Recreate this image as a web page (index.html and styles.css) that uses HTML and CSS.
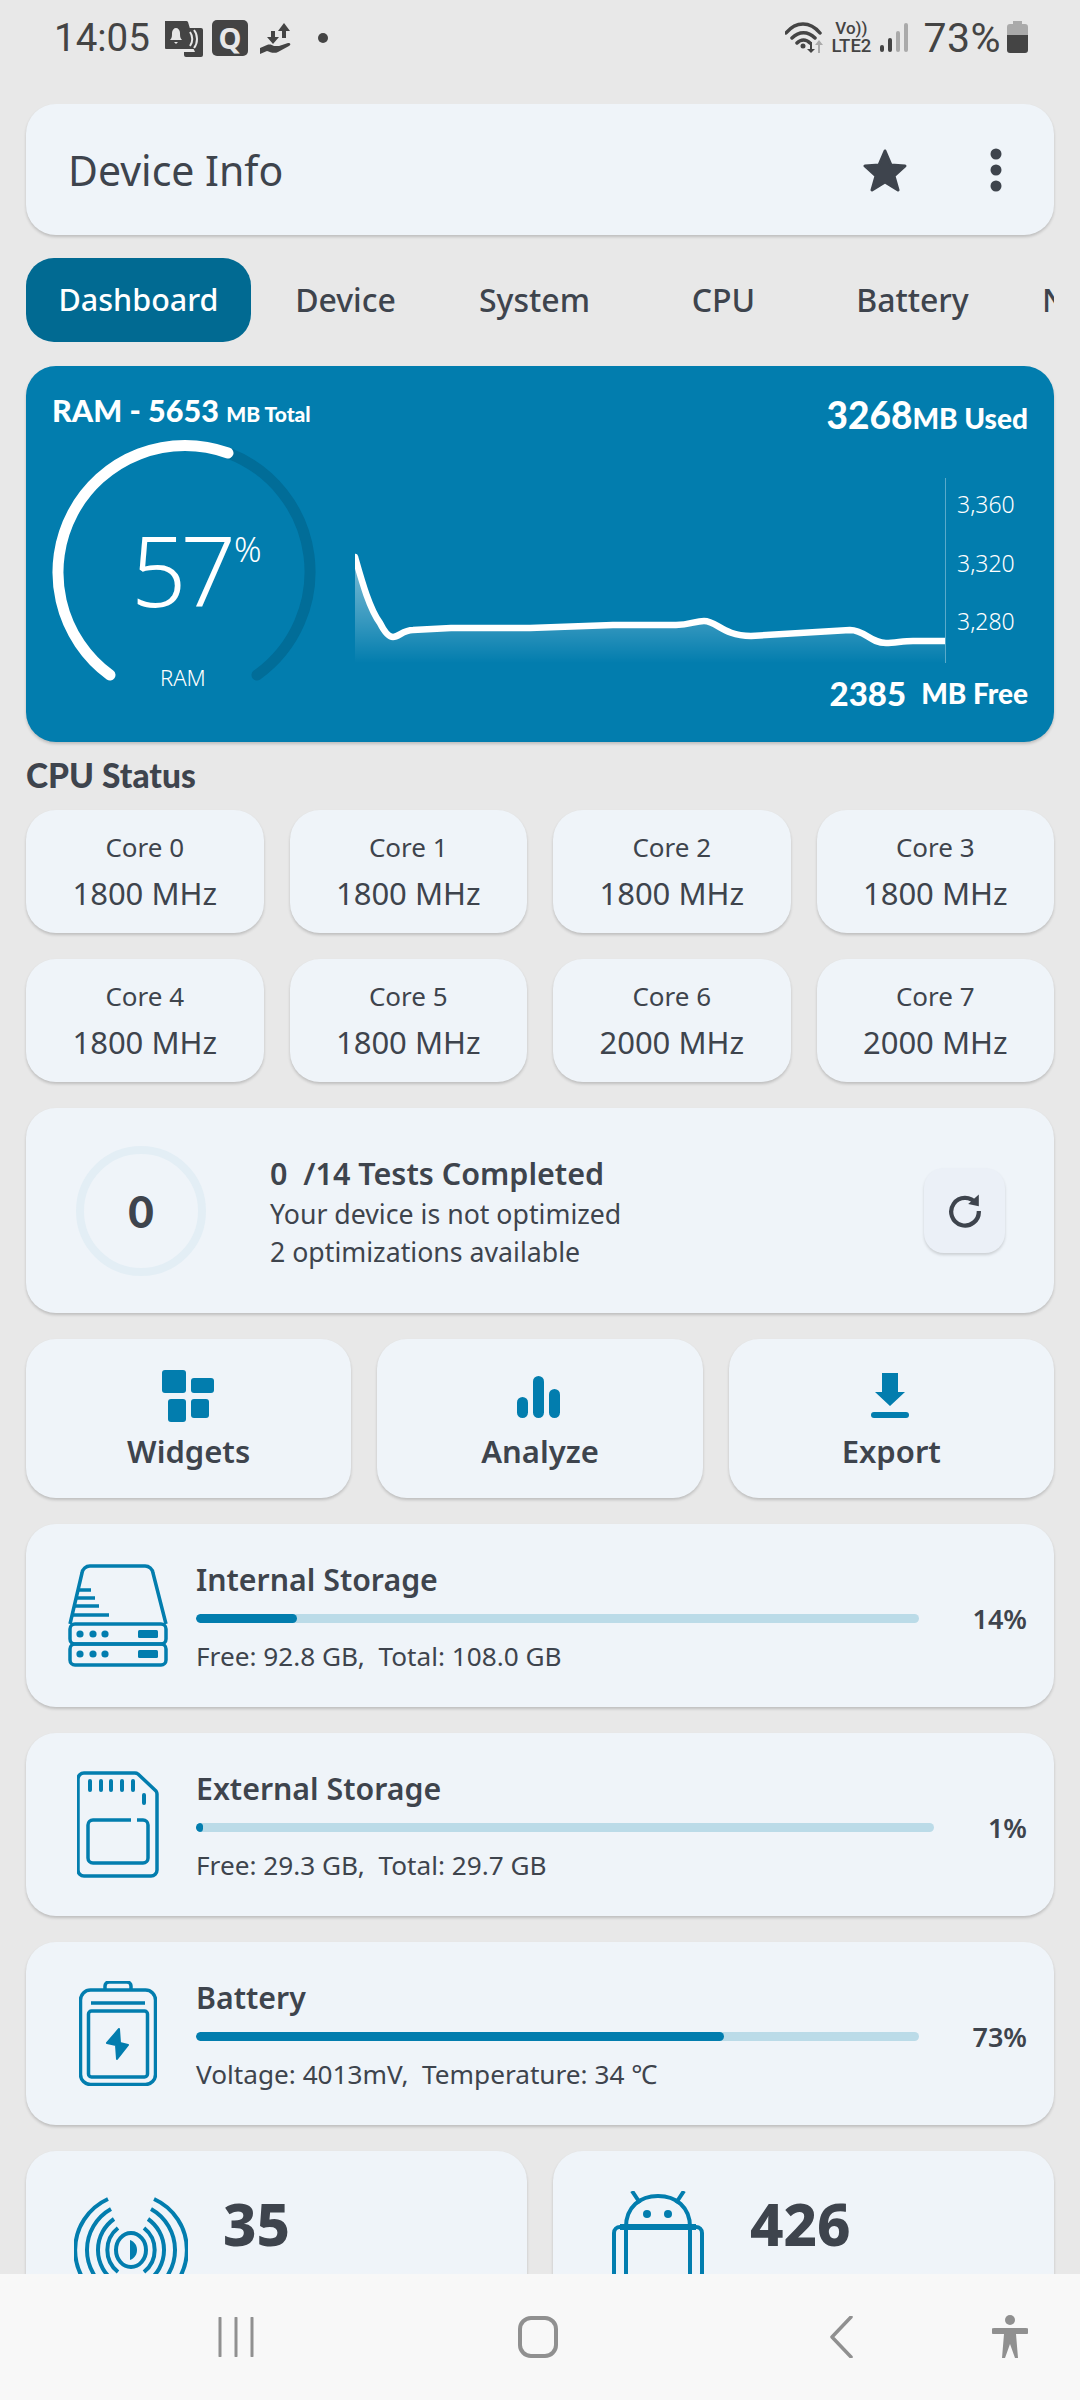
FILE: index.html
```html
<!DOCTYPE html>
<html lang="en">
<head>
<meta charset="utf-8">
<title>Device Info</title>
<link rel="stylesheet" href="styles.css">
</head>
<body>
<div class="screen">
  <header class="status">
    <div class="status-left">
      <span class="clock">14:05</span>
      <svg class="si-bell" viewBox="0 0 40 38"><path class="ink" d="M2 2h21a2 2 0 0 1 2 1l8 27h-30a1 1 0 0 1-1-1z"/><path class="cut" d="M7 21c2-2 2-4 2-7 0-3 2-5 4-5s4 2 4 5c0 3 0 5 2 7zM11 23h4l-2 2z"/><path class="ink" d="M21 9h17a2 2 0 0 1 2 2v25a2 2 0 0 1-2 2h-15a2 2 0 0 1-2-2v-3h11z"/><path class="arcs" d="M27 13c3 4 3 10 0 14M31 11c4 5 4 13 0 18"/></svg>
      <span class="si-q">Q</span>
      <svg class="si-transfer" viewBox="0 0 32 32"><path class="ink" d="M11 8h4v6h4l-6 7-6-7h4zM22 15V8h-4l6-8 6 8h-4v7z"/><path class="ink" d="M0 25l7-3c3-1 5 0 7 1h5l9-3c3 0 3 2 1 3l-11 6c-4 2-8 0-11-1l-7 3z"/></svg>
      <span class="si-dot"></span>
    </div>
    <div class="status-right">
      <svg class="si-wifi" viewBox="0 0 42 31"><path class="wifi" d="M1 11c10-12 24-12 34 0M7 16c7-7 16-7 23 0M12 21c4-4 9-4 13 0"/><circle class="ink" cx="18" cy="24" r="2.5"/><path class="ink" d="M25 20h2v7h3l-4 4-4-4h3z"/><path class="grey" d="M33 31v-8h-3l4-5 4 5h-3v8z"/></svg>
      <span class="net"><span class="net-vo">Vo))</span><span class="net-lte">LTE2</span></span>
      <svg class="si-signal" viewBox="0 0 28 30"><rect class="ink" x="0" y="22" width="4" height="7" rx="2"/><rect class="ink" x="8" y="15" width="4" height="14" rx="2"/><rect class="grey" x="16" y="8" width="4" height="21" rx="2"/><rect class="grey" x="24" y="0" width="4" height="29" rx="2"/></svg>
      <span class="pct">73%</span>
      <svg class="si-batt" viewBox="0 0 21 32"><path class="grey" d="M6 0h9v3h3a3 3 0 0 1 3 3v9H0V6a3 3 0 0 1 3-3h3z"/><path class="ink" d="M0 14h21v15a3 3 0 0 1-3 3H3a3 3 0 0 1-3-3z"/></svg>
    </div>
  </header>

  <main class="content">
    <section class="card appbar">
      <h1 class="app-title">Device Info</h1>
      <svg class="star" viewBox="0 0 46 44"><path d="M23 3l6 14 14 1-11 10 4 14-13-8-13 8 4-14L3 18l14-1z"/></svg>
      <svg class="dots" viewBox="0 0 12 44"><circle cx="6" cy="6" r="5.5"/><circle cx="6" cy="22" r="5.5"/><circle cx="6" cy="38" r="5.5"/></svg>
    </section>

    <nav class="tabs">
      <span class="tab tab-on">Dashboard</span>
      <span class="tab">Device</span>
      <span class="tab">System</span>
      <span class="tab">CPU</span>
      <span class="tab">Battery</span>
      <span class="tab tab-last">Network</span>
    </nav>

    <section class="ram">
      <div class="ram-head">
        <span class="ram-total"><b>RAM - 5653</b> <small>MB Total</small></span>
        <span class="ram-used"><b>3268</b><small>MB Used</small></span>
      </div>
      <div class="ram-body">
        <div class="gauge">
          <svg class="gauge-svg" viewBox="0 0 264 250">
            <path class="g-track" d="M205 239A127 127 0 0 0 176 17"/>
            <path class="g-fill" d="M58 239A127 127 0 0 1 176 17"/>
          </svg>
          <span class="gauge-val">57</span>
          <span class="gauge-unit">%</span>
          <span class="gauge-name">RAM</span>
        </div>
        <div class="ram-right">
          <div class="plot">
            <svg class="chart" viewBox="0 0 590 185">
              <defs><linearGradient id="fade" gradientUnits="userSpaceOnUse" x1="0" y1="79" x2="0" y2="185"><stop offset="0" stop-color="#fff" stop-opacity=".5"/><stop offset=".62" stop-color="#fff" stop-opacity=".2"/><stop offset="1" stop-color="#fff" stop-opacity="0"/></linearGradient></defs>
              <path fill="url(#fade)" d="M0 79C6 100 14 130 25 145C30 155 34 159 38 159C44 159 48 152 58 152L96 150L175 150L258 147L321 147C335 147 340 143 349 143C362 143 368 158 396 158L495 152C510 152 515 165 531 165C540 165 548 163 558 163L590 163V185H0Z"/>
              <path class="line" d="M0 79C6 100 14 130 25 145C30 155 34 159 38 159C44 159 48 152 58 152L96 150L175 150L258 147L321 147C335 147 340 143 349 143C362 143 368 158 396 158L495 152C510 152 515 165 531 165C540 165 548 163 558 163L590 163"/>
            </svg>
            <div class="axis"><span>3,360</span><span>3,320</span><span>3,280</span></div>
          </div>
          <div class="ram-free"><b>2385</b><small>MB Free</small></div>
        </div>
      </div>
    </section>

    <h2 class="section-title">CPU Status</h2>
    <section class="cores">
      <div class="card core"><span class="core-name">Core 0</span><span class="core-val">1800 MHz</span></div>
      <div class="card core"><span class="core-name">Core 1</span><span class="core-val">1800 MHz</span></div>
      <div class="card core"><span class="core-name">Core 2</span><span class="core-val">1800 MHz</span></div>
      <div class="card core"><span class="core-name">Core 3</span><span class="core-val">1800 MHz</span></div>
      <div class="card core"><span class="core-name">Core 4</span><span class="core-val">1800 MHz</span></div>
      <div class="card core"><span class="core-name">Core 5</span><span class="core-val">1800 MHz</span></div>
      <div class="card core"><span class="core-name">Core 6</span><span class="core-val">2000 MHz</span></div>
      <div class="card core"><span class="core-name">Core 7</span><span class="core-val">2000 MHz</span></div>
    </section>

    <section class="card tests">
      <div class="ring">0</div>
      <div class="tests-text">
        <div class="tests-title">0&nbsp;&nbsp;/14 Tests Completed</div>
        <div class="tests-sub">Your device is not optimized</div>
        <div class="tests-sub">2 optimizations available</div>
      </div>
      <div class="refresh">
        <svg viewBox="0 0 32 32"><path class="ref-arc" d="M26.5 9A13 13 0 1 0 29 16"/><path class="ref-head" d="M19 9.5L29 11.5V0.5z"/></svg>
      </div>
    </section>

    <section class="actions">
      <div class="card action">
        <svg class="act-icon" viewBox="0 0 52 52"><rect class="blue" x="0" y="0" width="24" height="23" rx="3"/><rect class="blue" x="29" y="8" width="23" height="15" rx="3"/><rect class="blue" x="6" y="29" width="18" height="23" rx="3"/><rect class="blue" x="29" y="29" width="18" height="19" rx="3"/></svg>
        <span class="act-label">Widgets</span>
      </div>
      <div class="card action">
        <svg class="act-icon" viewBox="0 0 52 52"><rect class="blue" x="4" y="27" width="11" height="21" rx="5.5"/><rect class="blue" x="20" y="6" width="11" height="42" rx="5.5"/><rect class="blue" x="36" y="19" width="11" height="29" rx="5.5"/></svg>
        <span class="act-label">Analyze</span>
      </div>
      <div class="card action">
        <svg class="act-icon" viewBox="0 0 52 52"><path class="blue" d="M18 3h16v19h7L26 36 11 22h7z"/><rect class="blue" x="7" y="42" width="38" height="6" rx="3"/></svg>
        <span class="act-label">Export</span>
      </div>
    </section>

    <section class="card store">
      <svg class="store-icon drive" viewBox="0 0 100 103"><g class="out"><path d="M2 60L14 9a8 8 0 0 1 8-7h55a8 8 0 0 1 8 7l13 51"/><rect x="2" y="60" width="96" height="20" rx="5"/><rect x="2" y="80" width="96" height="21" rx="5"/><path d="M9 26h14M7 34h20M5 42h26M3 51h38"/></g><g class="blue"><circle cx="12" cy="70" r="3.6"/><circle cx="25" cy="70" r="3.6"/><circle cx="37" cy="70" r="3.6"/><rect x="70" y="66" width="20" height="8" rx="1.5"/><circle cx="12" cy="90" r="3.6"/><circle cx="25" cy="90" r="3.6"/><circle cx="37" cy="90" r="3.6"/><rect x="70" y="86" width="20" height="8" rx="1.5"/></g></svg>
      <div class="store-main">
        <div class="store-title">Internal Storage</div>
        <div class="bar bar-narrow"><div class="bar-fill" style="width:14%"></div></div>
        <div class="store-sub">Free: 92.8 GB,&nbsp; Total: 108.0 GB</div>
      </div>
      <span class="store-pct">14%</span>
    </section>

    <section class="card store">
      <svg class="store-icon sd" viewBox="0 0 82 107"><g class="out"><path d="M7 2h50a5 5 0 0 1 4 1l18 17a5 5 0 0 1 1 3v76a6 6 0 0 1-6 6H7a6 6 0 0 1-6-6V8a6 6 0 0 1 6-6z"/><path d="M54 49H16a5 5 0 0 0-5 5v33a5 5 0 0 0 5 5h50a5 5 0 0 0 5-5V54a5 5 0 0 0-5-5h-6"/><path class="ticks" d="M13 10v9M24 10v9M34 10v9M45 10v9M56 10v9M67 24v8"/></g></svg>
      <div class="store-main">
        <div class="store-title">External Storage</div>
        <div class="bar"><div class="bar-fill bar-dot"></div></div>
        <div class="store-sub">Free: 29.3 GB,&nbsp; Total: 29.7 GB</div>
      </div>
      <span class="store-pct">1%</span>
    </section>

    <section class="card store">
      <svg class="store-icon batt" viewBox="0 0 78 105"><g class="out"><path d="M26 9V5a4 4 0 0 1 4-4h18a4 4 0 0 1 4 4v4"/><rect x="1.500" y="9" width="75" height="94.500" rx="10"/><path d="M12 22h54"/><rect x="9.500" y="30" width="59" height="66" rx="3"/></g><path class="bolt" d="M40 48L28 62l9 2 1 14 11-14-8-2z"/></svg>
      <div class="store-main">
        <div class="store-title">Battery</div>
        <div class="bar bar-narrow"><div class="bar-fill" style="width:73%"></div></div>
        <div class="store-sub">Voltage: 4013mV,&nbsp; Temperature: 34 ℃</div>
      </div>
      <span class="store-pct">73%</span>
    </section>

    <section class="tiles">
      <div class="card tile">
        <svg class="tile-icon" viewBox="0 0 114 110">
          <g class="rings">
            <path d="M34 4A56 56 0 0 0 34 106M80 4A56 56 0 0 1 80 106"/>
            <path d="M37 14A47 47 0 0 0 37 96M77 14A47 47 0 0 1 77 96"/>
            <path d="M40 24A38 38 0 0 0 40 86M74 24A38 38 0 0 1 74 86"/>
            <path d="M44 33A28 28 0 0 0 44 77M70 33A28 28 0 0 1 70 77"/>
            <ellipse cx="57" cy="55" rx="15" ry="17"/>
          </g>
          <path class="blue" d="M56 45c5 2 7 6 7 10s-2 8-7 10z"/>
        </svg>
        <span class="tile-num">35</span>
      </div>
      <div class="card tile tile-droid">
        <svg class="droid" viewBox="0 0 92 100">
          <g class="rings">
            <path d="M14 36C14 16 28 5 46 5C64 5 78 16 78 36"/>
            <path class="heavy" d="M8 36H84"/>
            <path d="M20 0l8 12M72 0l-8 12"/>
            <path d="M14 36V100M78 36V100"/>
            <path d="M14 88H8a6 6 0 0 1-6-6V42a6 6 0 0 1 6-6M78 88h6a6 6 0 0 0 6-6V42a6 6 0 0 0-6-6"/>
          </g>
          <circle class="blue" cx="35" cy="23" r="4"/><circle class="blue" cx="56" cy="23" r="4"/>
        </svg>
        <span class="tile-num">426</span>
      </div>
    </section>
  </main>

  <footer class="navbar">
    <svg class="nav-recents" viewBox="0 0 36 40"><path d="M2 1v38M18 1v38M34 1v38"/></svg>
    <svg class="nav-home" viewBox="0 0 40 42"><rect x="2" y="2" width="36" height="38" rx="11"/></svg>
    <svg class="nav-back" viewBox="0 0 23 42"><path d="M21 1L2 21l19 20"/></svg>
    <svg class="nav-a11y" viewBox="0 0 36 44"><circle cx="18" cy="5" r="5"/><path d="M2 13h32a2 2 0 0 1 0 6H24l2 24h-3l-5-14-5 14h-3l2-24H2a2 2 0 0 1 0-6z"/></svg>
  </footer>
</div>
</body>
</html>
```
FILE: styles.css
```css
* { box-sizing: border-box; }
html, body { margin: 0; padding: 0; }
body { background: #e8e8e8; color: #3e444d; font-family: "Noto Sans", sans-serif; }
.screen { width: 1080px; height: 2400px; display: flex; flex-direction: column; overflow: hidden; }

.status { height: 104px; flex: none; display: flex; justify-content: space-between; padding: 19px 52px 0 54px; color: #444; font-family: Roboto, sans-serif; }
.status-left, .status-right { display: flex; align-items: flex-start; }
.clock { font-size: 38.5px; line-height: 38px; width: 109px; }
.ink { fill: #444; }
.grey { fill: #aaa; }
.cut { fill: #e8e8e8; }
.arcs { fill: none; stroke: #e8e8e8; stroke-width: 2; }
.si-bell { width: 40px; height: 38px; }
.si-q { width: 36px; height: 36px; margin: 1px 0 0 9px; background: #444; color: #e8e8e8; border-radius: 5px; font: 700 29px/36px "Noto Sans", sans-serif; text-align: center; }
.si-transfer { width: 32px; height: 32px; margin: 4px 0 0 12px; }
.si-dot { width: 10px; height: 10px; margin: 14px 0 0 26px; border-radius: 50%; background: #444; }
.si-wifi { width: 42px; height: 31px; margin-top: 3px; }
.wifi { fill: none; stroke: #444; stroke-width: 3.5; stroke-linecap: round; }
.net { width: 44px; margin-left: 2px; display: flex; flex-direction: column; align-items: center; font-weight: 500; line-height: 15px; }
.net-vo { font-size: 17px; margin-top: 2px; }
.net-lte { font-size: 18.5px; margin-top: 3px; }
.si-signal { width: 28px; height: 30px; margin: 4px 0 0 7px; }
.pct { font-size: 41px; line-height: 38px; margin-left: 15px; letter-spacing: .5px; }
.si-batt { width: 21px; height: 32px; margin: 2px 0 0 6px; }

.content { flex: 1; min-height: 0; overflow: hidden; padding: 0 26px; display: flex; flex-direction: column; }
.card { background: #eff4f9; border-radius: 30px; box-shadow: 0 2px 3px rgba(0, 0, 0, .18); }

.appbar { height: 131px; flex: none; display: flex; align-items: center; padding: 0 52px 0 42px; }
.app-title { flex: 1; margin: 0; font-size: 41px; font-weight: 400; }
.star { width: 46px; height: 44px; fill: #3e444d; stroke: #3e444d; stroke-width: 3; stroke-linejoin: round; }
.dots { width: 12px; height: 44px; margin-left: 82px; fill: #3e444d; }

.tabs { height: 84px; flex: none; margin-top: 23px; display: flex; overflow: hidden; font-size: 32px; font-weight: 500; }
.tab { flex: 0 0 189px; display: flex; align-items: center; justify-content: center; padding-bottom: 2px; }
.tab-on { flex: 0 0 225px; background: #016a92; color: #fff; border-radius: 28px; font-size: 30.5px; }
.tab-last { flex: none; padding-left: 35px; justify-content: flex-start; }

.ram { height: 376px; flex: none; margin-top: 24px; padding: 26px; background: #027dae; color: #fff; border-radius: 30px; box-shadow: 0 2px 3px rgba(0, 0, 0, .18); font-family: Lato, sans-serif; }
.ram-head { height: 44px; display: flex; justify-content: space-between; font-weight: 700; }
.ram-total { font-size: 30.5px; line-height: 36px; }
.ram-total b { font-weight: 900; }
.ram-total small { font-size: 21px; font-weight: 900; }
.ram-used { font-size: 28px; line-height: 46px; }
.ram-used b { font-size: 37px; font-weight: 900; }
.ram-used small { font-size: 28px; font-weight: 900; }
.ram-body { display: flex; gap: 39px; }
.gauge { position: relative; width: 264px; height: 250px; flex: none; }
.gauge-svg { width: 264px; height: 250px; display: block; }
.g-track, .g-fill { fill: none; stroke-width: 11; stroke-linecap: round; }
.g-track { stroke: #016d98; }
.g-fill { stroke: #fff; }
.gauge-val { position: absolute; left: 79px; top: 68px; font: 300 97px/130px "Noto Sans", sans-serif; letter-spacing: -6px; }
.gauge-unit { position: absolute; left: 182px; top: 88px; font: 300 34px/50px "Noto Sans", sans-serif; }
.gauge-name { position: absolute; left: 108px; top: 226px; font: 300 22px/30px "Noto Sans", sans-serif; }
.ram-right { flex: 1; min-width: 0; }
.plot { display: flex; margin-top: 42px; height: 185px; }
.chart { width: 590px; height: 185px; flex: none; }
.line { fill: none; stroke: #fff; stroke-width: 6.5; stroke-linejoin: round; stroke-linecap: round; }
.axis { flex: 1; display: flex; flex-direction: column; border-left: 1px solid rgba(255, 255, 255, .35); padding: 0 0 0 11px; font: 300 23px/58.5px "Noto Sans", sans-serif; }
.axis span:first-child { margin-top: -3px; }
.ram-free { margin-top: 10px; display: flex; justify-content: flex-end; align-items: center; gap: 15px; height: 40px; font-weight: 900; }
.ram-free b { font-size: 33px; font-weight: 900; }
.ram-free small { font-size: 28px; font-weight: 900; }

.section-title { height: 68px; margin: 0; flex: none; font: 900 33.5px/66px Lato, sans-serif; }

.cores { flex: none; display: grid; grid-template-columns: repeat(4, 1fr); grid-auto-rows: 123px; gap: 26px; }
.core { display: flex; flex-direction: column; align-items: center; justify-content: center; }
.core-name { font-size: 26px; line-height: 38px; }
.core-val { font-size: 31px; line-height: 46px; margin-top: 4px; }

.tests { height: 205px; flex: none; margin-top: 26px; display: flex; align-items: center; padding: 0 49px 0 50px; }
.ring { width: 130px; height: 130px; flex: none; border: 8px solid #e3eef5; border-radius: 50%; display: flex; align-items: center; justify-content: center; font: 900 44px/1 Lato, sans-serif; }
.tests-text { flex: 1; margin-left: 64px; }
.tests-title { font-size: 30.5px; font-weight: 600; line-height: 44px; }
.tests-sub { font-size: 26.7px; line-height: 38px; }
.refresh { width: 81px; height: 85px; flex: none; background: #ebf0f7; border-radius: 20px; box-shadow: 0 2px 3px rgba(0, 0, 0, .15); display: flex; align-items: center; justify-content: center; }
.refresh svg { width: 34px; height: 34px; }
.ref-arc { fill: none; stroke: #3e444d; stroke-width: 4; }
.ref-head { fill: #3e444d; }

.actions { flex: none; margin-top: 26px; display: grid; grid-template-columns: repeat(3, 1fr); gap: 26px; }
.action { height: 159px; display: flex; flex-direction: column; align-items: center; padding-top: 31px; }
.act-icon { width: 52px; height: 52px; margin-left: -2px; }
.blue { fill: #027dae; }
.act-label { font-size: 31px; font-weight: 600; line-height: 44px; margin-top: 7px; }

.store { height: 183px; flex: none; margin-top: 26px; display: flex; align-items: center; padding: 0 27px 0 0; }
.store-icon { flex: none; }
.out { fill: none; stroke: #027dae; stroke-width: 3.5; stroke-linejoin: round; }
.ticks { stroke-width: 4; stroke-linecap: round; }
.bolt { fill: #027dae; stroke: #027dae; stroke-width: 2; stroke-linejoin: round; }
.drive { width: 100px; height: 103px; margin: 0 28px 0 42px; }
.sd { width: 82px; height: 107px; margin: 0 37px 0 51px; }
.batt { width: 78px; height: 105px; margin: 0 39px 0 53px; }
.store-main { flex: 1; min-width: 0; padding-top: 3px; }
.store-title { font-size: 30.3px; font-weight: 600; line-height: 40px; }
.bar { height: 9px; margin: 14.5px 0 13.5px; width: 738px; background: #bbdbe8; border-radius: 5px; overflow: hidden; }
.bar-narrow { width: 723px; }
.bar-fill { height: 100%; background: #027dae; border-radius: 5px; }
.bar-dot { width: 7px; }
.store-sub { font-size: 26.2px; line-height: 38px; }
.store-pct { font-size: 27px; font-weight: 600; padding-top: 6px; }

.tiles { flex: none; margin-top: 26px; display: grid; grid-template-columns: 1fr 1fr; gap: 26px; }
.tile { height: 220px; display: flex; align-items: flex-start; padding: 44px 0 0 48px; }
.tile-droid { padding: 40px 0 0 59px; }
.tile-icon { width: 114px; height: 110px; flex: none; }
.droid { width: 92px; height: 100px; flex: none; }
.rings { fill: none; stroke: #027dae; stroke-width: 4; }
.heavy { stroke-width: 6; }
.tile-num { margin: -6px 0 0 35px; font-size: 58px; font-weight: 800; line-height: 70px; }
.tile-droid .tile-num { margin: -2px 0 0 46px; }

.navbar { height: 126px; flex: none; background: #f8f8f8; display: flex; align-items: center; padding: 0 0 0 218px; }
.navbar svg { display: block; flex: none; }
.nav-recents { width: 36px; height: 40px; fill: none; stroke: #909090; stroke-width: 3; stroke-linecap: round; }
.nav-home { width: 40px; height: 42px; margin-left: 264px; fill: none; stroke: #909090; stroke-width: 4; }
.nav-back { width: 23px; height: 42px; margin-left: 272px; fill: none; stroke: #909090; stroke-width: 3.5; stroke-linejoin: round; stroke-linecap: round; }
.nav-a11y { width: 36px; height: 44px; margin-left: 139px; fill: #909090; }
```
